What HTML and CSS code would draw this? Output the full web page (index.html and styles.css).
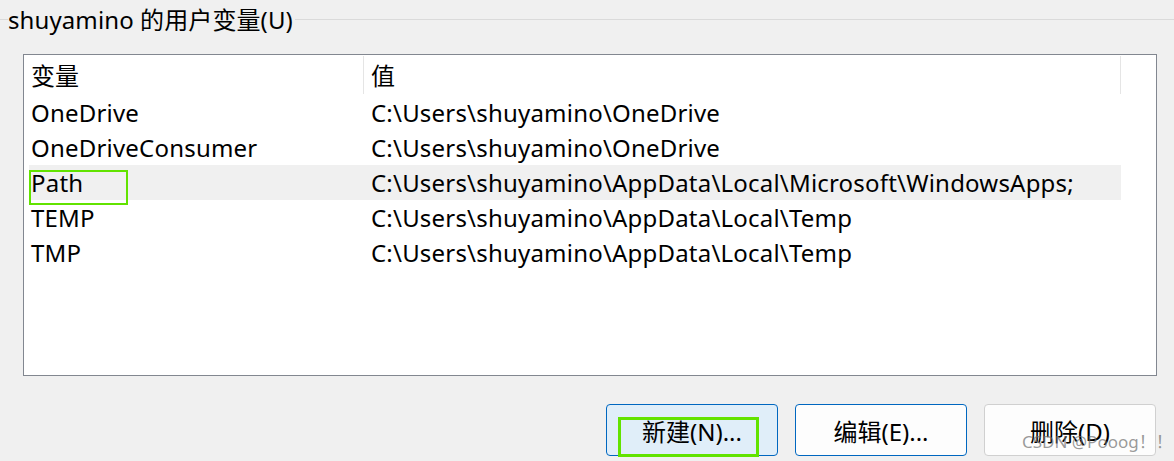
FILE: index.html
```html
<!DOCTYPE html>
<html lang="zh-CN">
<head>
<meta charset="utf-8">
<title>用户变量</title>
<link rel="stylesheet" href="styles.css">
</head>
<body>
<div class="title-row">
  <span class="gl gl-left"></span>
  <span class="title">shuyamino 的用户变量(U)</span>
  <span class="gl gl-right"></span>
</div>
<div class="listbox">
  <div class="header">
    <div class="hcell c1">变量</div>
    <div class="hcell c2">值</div>
  </div>
  <div class="row"><div class="cell c1">OneDrive</div><div class="cell c2">C:\Users\shuyamino\OneDrive</div></div>
  <div class="row"><div class="cell c1">OneDriveConsumer</div><div class="cell c2">C:\Users\shuyamino\OneDrive</div></div>
  <div class="row selected"><div class="cell c1">Path<span class="mark mark-path"></span></div><div class="cell c2">C:\Users\shuyamino\AppData\Local\Microsoft\WindowsApps;</div></div>
  <div class="row"><div class="cell c1">TEMP</div><div class="cell c2">C:\Users\shuyamino\AppData\Local\Temp</div></div>
  <div class="row"><div class="cell c1">TMP</div><div class="cell c2">C:\Users\shuyamino\AppData\Local\Temp</div></div>
</div>
<div class="buttons">
  <div class="btn btn-focus">新建(N)...<span class="mark mark-btn"></span></div>
  <div class="btn btn-accent">编辑(E)...</div>
  <div class="btn btn-plain">删除(D)</div>
  <div class="watermark">CSDN @Pooog！！</div>
</div>
</body>
</html>
```

FILE: styles.css
```css
html, body {
  margin: 0;
  padding: 0;
  background: #f0f0f0;
}
body {
  font-family: "Noto Sans", "Noto Sans CJK SC", sans-serif;
  font-size: 24px;
  color: #000;
  width: 1174px;
  height: 461px;
  overflow: hidden;
}
.title-row {
  display: flex;
  align-items: flex-start;
  padding-top: 5px;
  height: 30px;
}
.gl {
  height: 1px;
  background: #dadada;
  margin-top: 14px;
}
.gl-left { width: 8px; }
.gl-right { flex: 1; margin-left: 2px; }
.title {
  line-height: 30px;
  white-space: nowrap;
  letter-spacing: 0.1px;
}
.listbox {
  margin: 19px 0 0 23px;
  width: 1134px;
  height: 322px;
  box-sizing: border-box;
  border: 1px solid #828790;
  background: #fff;
  padding-left: 5px;
}
.header {
  display: flex;
  height: 40px;
}
.hcell {
  margin-top: 1px;
  height: 38px;
  line-height: 40px;
  white-space: nowrap;
  box-sizing: border-box;
}
.hcell.c1 { width: 334px; padding-left: 2px; }
.hcell.c2 {
  width: 758px;
  padding-left: 7px;
  border-left: 1px solid #e5e5e5;
  border-right: 1px solid #e5e5e5;
}
.row {
  display: flex;
  width: 1092px;
  height: 35px;
  line-height: 35px;
  letter-spacing: 0.2px;
}
.row.selected { background: #f0f0f0; }
.cell { white-space: nowrap; box-sizing: border-box; }
.cell.c1 { width: 334px; padding-left: 2px; position: relative; }
.cell.c2 { padding-left: 8px; }
.mark {
  position: absolute;
  border: 2px solid #62e300;
  box-sizing: border-box;
  pointer-events: none;
}
.mark-path {
  left: 0;
  top: 5px;
  width: 99px;
  height: 35px;
}
.buttons {
  position: relative;
  display: flex;
  justify-content: flex-end;
  gap: 17px;
  margin-top: 28px;
  padding-right: 18px;
}
.btn {
  position: relative;
  width: 172px;
  height: 52px;
  box-sizing: border-box;
  border-radius: 4px;
  display: flex;
  align-items: center;
  justify-content: center;
  font-size: 24px;
  white-space: nowrap;
}
.btn-focus { background: #e0eef9; border: 1px solid #0067c0; }
.btn-accent { background: #fdfdfd; border: 1px solid #0067c0; }
.btn-plain { background: #fdfdfd; border: 1px solid #d0d0d0; }
.mark-btn {
  left: 11px;
  top: 12px;
  width: 141px;
  height: 40px;
  border-width: 3px;
}
.watermark {
  position: absolute;
  left: 1022px;
  top: 24px;
  font-family: "Noto Sans", "Noto Sans CJK SC", sans-serif;
  font-size: 17px;
  color: rgba(110, 110, 110, 0.7);
  white-space: nowrap;
}
```
